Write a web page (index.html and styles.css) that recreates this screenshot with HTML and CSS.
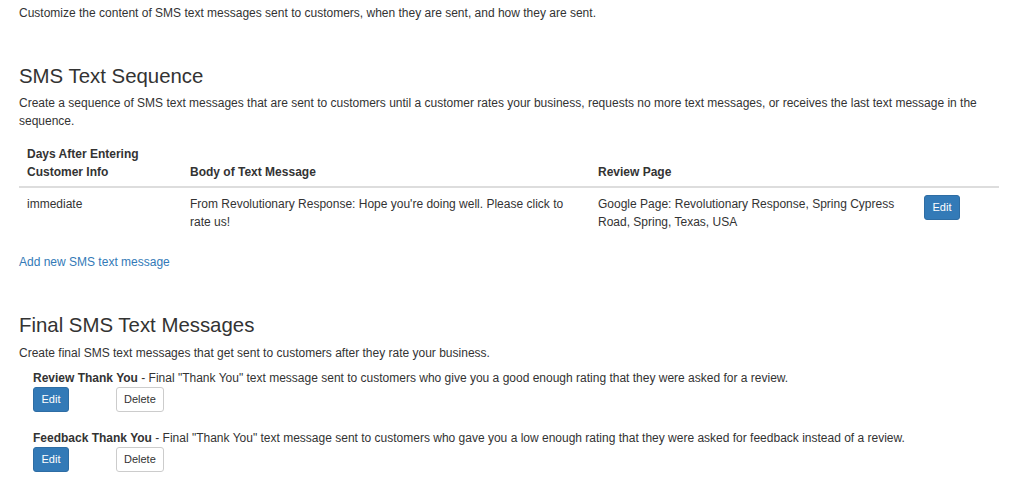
FILE: index.html
```html
<!DOCTYPE html>
<html>
<head>
<meta charset="utf-8">
<link rel="stylesheet" href="styles.css">
</head>
<body>
<div class="page">
  <p class="intro">Customize the content of SMS text messages sent to customers, when they are sent, and how they are sent.</p>

  <section class="section seq">
    <h2 class="heading">SMS Text Sequence</h2>
    <p class="desc">Create a sequence of SMS text messages that are sent to customers until a customer rates your business, requests no more text messages, or receives the last text message in the sequence.</p>
    <table class="seq-table">
      <colgroup>
        <col class="c-days">
        <col class="c-body">
        <col class="c-page">
        <col class="c-act">
      </colgroup>
      <thead>
        <tr>
          <th>Days After Entering<br>Customer Info</th>
          <th>Body of Text Message</th>
          <th>Review Page</th>
          <th></th>
        </tr>
      </thead>
      <tbody>
        <tr>
          <td>immediate</td>
          <td>From Revolutionary Response: Hope you're doing well. Please click to rate us!</td>
          <td>Google Page: Revolutionary Response, Spring Cypress Road, Spring, Texas, USA</td>
          <td><button class="btn btn-primary">Edit</button></td>
        </tr>
      </tbody>
    </table>
    <a class="add-link" href="#">Add new SMS text message</a>
  </section>

  <section class="section final">
    <h2 class="heading">Final SMS Text Messages</h2>
    <p class="desc">Create final SMS text messages that get sent to customers after they rate your business.</p>
    <div class="final-item">
      <div class="final-text"><strong>Review Thank You</strong> - Final "Thank You" text message sent to customers who give you a good enough rating that they were asked for a review.</div>
      <div class="final-actions">
        <button class="btn btn-primary">Edit</button>
        <button class="btn btn-default">Delete</button>
      </div>
    </div>
    <div class="final-item">
      <div class="final-text"><strong>Feedback Thank You</strong> - Final "Thank You" text message sent to customers who gave you a low enough rating that they were asked for feedback instead of a review.</div>
      <div class="final-actions">
        <button class="btn btn-primary">Edit</button>
        <button class="btn btn-default">Delete</button>
      </div>
    </div>
  </section>
</div>
</body>
</html>
```

FILE: styles.css
```css
html, body {
  margin: 0;
  padding: 0;
  background: #ffffff;
}
body {
  font-family: "Liberation Sans", Arial, sans-serif;
  font-size: 12px;
  line-height: 18px;
  color: #333333;
}
.page {
  width: 980px;
  padding: 4px 0 0 19px;
}
.intro {
  margin: 0;
}
.heading {
  font-size: 20.4px;
  font-weight: 400;
  line-height: 22px;
  margin: 0;
  color: #333333;
}
.seq {
  margin-top: 43px;
}
.desc {
  margin: 7px 0 0;
}
.seq-table {
  margin-top: 7px;
  width: 980px;
  border-collapse: collapse;
  table-layout: fixed;
}
.c-days { width: 163px; }
.c-body { width: 408px; }
.c-page { width: 326px; }
.c-act { width: 83px; }
.seq-table th {
  text-align: left;
  vertical-align: bottom;
  font-weight: 700;
  padding: 8px 8px 5px;
  border-bottom: 2px solid #dddddd;
}
.seq-table td {
  vertical-align: top;
  padding: 7px 8px 8px;
}
.add-link {
  display: block;
  margin-top: 14px;
  color: #337ab7;
  text-decoration: none;
}
.final {
  margin-top: 43px;
}
.final .desc {
  margin-top: 8px;
}
.final-item {
  padding-left: 14px;
  margin-top: 7px;
}
.final-item + .final-item {
  margin-top: 17px;
}
.final-actions {
  display: flex;
  gap: 47px;
}
.btn {
  font-family: "Liberation Sans", Arial, sans-serif;
  font-size: 11px;
  line-height: 17px;
  padding: 3px 7.5px;
  border-radius: 3px;
  border: 1px solid transparent;
  cursor: pointer;
}
.btn-primary {
  background: #337ab7;
  border-color: #2e6da4;
  color: #ffffff;
}
.btn-default {
  background: #ffffff;
  border-color: #cccccc;
  color: #333333;
  padding: 3px 7px;
}
```
